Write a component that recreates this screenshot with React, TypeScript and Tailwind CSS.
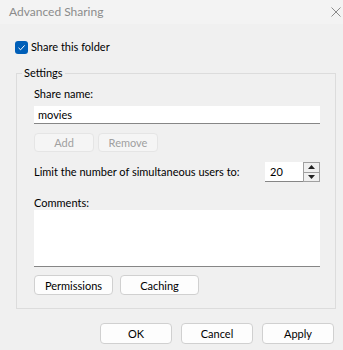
import React from 'react';

function WinButton({
  label,
  disabled = false,
  className = '',
}: {
  label: string;
  disabled?: boolean;
  className?: string;
}) {
  return (
    <button
      type="button"
      disabled={disabled}
      className={
        disabled
          ? `flex items-center justify-center rounded-[4px] border border-[#e5e5e5] bg-[#f5f5f5] text-[11px] leading-none text-[#a0a0a0] ${className}`
          : `flex items-center justify-center rounded-[4px] border border-[#d0d0d0] bg-[#fdfdfd] text-[11px] leading-none text-black ${className}`
      }
    >
      {label}
    </button>
  );
}

export default function App() {
  return (
    <div
      className="relative h-[350px] w-[343px] overflow-hidden bg-[#f0f0f0] text-[11px] leading-[16px] text-black"
      style={{ fontFamily: 'Lato, "Noto Sans", Arial, sans-serif' }}
    >
      {/* Title bar */}
      <div className="flex h-[24px] items-center justify-between bg-[#f3f3f3] pl-[9px] pr-[2px]">
        <span className="text-[12px] text-[#8b8b8b]">Advanced Sharing</span>
        <svg width="10" height="10" viewBox="0 0 10 10">
          <path d="M0.5 0.5 L9.5 9.5 M9.5 0.5 L0.5 9.5" stroke="#8a8a8a" strokeWidth="1" />
        </svg>
      </div>

      {/* Share this folder */}
      <div className="ml-[15px] mt-[15px] flex h-[16px] items-center gap-[3px]">
        <span className="flex h-[13px] w-[13px] items-center justify-center rounded-[3px] bg-[#005fb8]">
          <svg width="9" height="9" viewBox="0 0 9 9">
            <path d="M1.5 4.8 L3.6 6.8 L7.6 2.4" fill="none" stroke="#ffffff" strokeWidth="1" />
          </svg>
        </span>
        <span>Share this folder</span>
      </div>

      {/* Settings group */}
      <fieldset className="mx-[16px] mt-[10px] w-[320px] border border-[#dcdcdc]">
        <legend className="ml-[5px] px-[2px] leading-[16px]">Settings</legend>
        <div className="flex flex-col pb-[13px] pl-[17px] pr-[15px] pt-[5px]">
          <span className="h-[16px]">Share name:</span>
          <div className="mt-[4px] flex h-[18px] items-center border-b border-[#868686] bg-white pl-[4px]">
            movies
          </div>
          <div className="mt-[9px] flex gap-[4px]">
            <WinButton label="Add" disabled className="h-[19px] w-[60px]" />
            <WinButton label="Remove" disabled className="h-[19px] w-[60px]" />
          </div>
          <div className="mt-[10px] flex h-[20px] items-center justify-between">
            <span className="whitespace-nowrap">Limit the number of simultaneous users to:</span>
            <div className="flex h-[20px]">
              <div className="flex w-[38px] items-center border-b border-[#868686] bg-white pl-[5px]">20</div>
              <div className="flex w-[17px] flex-col border border-[#a0a0a0] bg-[#f0f0f0]">
                <div className="flex flex-1 items-center justify-center border-b border-[#a0a0a0]">
                  <svg width="7" height="4" viewBox="0 0 7 4">
                    <path d="M0 4 L3.5 0 L7 4 Z" fill="#222" />
                  </svg>
                </div>
                <div className="flex flex-1 items-center justify-center">
                  <svg width="7" height="4" viewBox="0 0 7 4">
                    <path d="M0 0 L3.5 4 L7 0 Z" fill="#222" />
                  </svg>
                </div>
              </div>
            </div>
          </div>
          <span className="mt-[14px] h-[14px] leading-[14px]">Comments:</span>
          <div className="h-[57px] border-b border-[#868686] bg-white" />
          <div className="mt-[8px] flex gap-[7px]">
            <WinButton label="Permissions" className="h-[20px] w-[79px]" />
            <WinButton label="Caching" className="h-[20px] w-[79px]" />
          </div>
        </div>
      </fieldset>

      {/* Footer */}
      <div className="mr-[9px] mt-[14px] flex justify-end gap-[9px]">
        <WinButton label="OK" className="h-[21px] w-[72px]" />
        <WinButton label="Cancel" className="h-[21px] w-[72px]" />
        <WinButton label="Apply" className="h-[21px] w-[72px]" />
      </div>
    </div>
  );
}
